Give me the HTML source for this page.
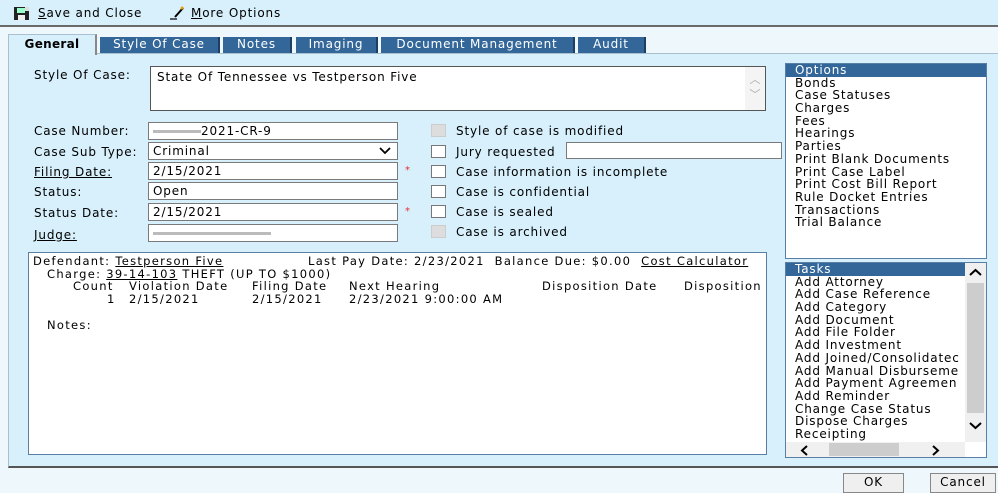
<!DOCTYPE html>
<html><head><meta charset="utf-8"><style>
*{margin:0;padding:0;box-sizing:border-box}
body{width:998px;height:489px;overflow:hidden;background:#eef7fc;font-family:"DejaVu Sans","Liberation Sans",sans-serif;font-size:12px;letter-spacing:0.85px;color:#000;position:relative}
.a{position:absolute;white-space:nowrap}
.tb{left:0;top:0;width:998px;height:27px;background:#d7f0fc;border-bottom:2px solid #6a6a6a}
.tab{position:absolute;top:37px;height:16px;background:#336699;color:#fff;text-align:center;line-height:15px;font-size:12px;border-right:2px solid #1e3e63;white-space:nowrap}
.main{left:8px;top:53px;width:990px;height:415px;background:#d7f0fc;border-top:1px solid #a8c0d0;border-bottom:2px solid #555;border-left:1px solid #a8c0d0}
.in{position:absolute;height:18px;background:#fff;border:1px solid #7a7a7a;padding-left:4px;line-height:16px;white-space:nowrap}
.cb{position:absolute;left:431px;width:15px;height:13px;background:#fff;border:1px solid #777}
.cb.d{background:#ddd;border-color:#ccc}
.lbl{position:absolute;left:456px;white-space:nowrap}
.red{position:absolute;left:405px;color:#e03030;font-size:10px}
.u{text-decoration:underline}
.box{position:absolute;background:#fff;border:1px solid #5a7fa5}
.hd{background:#336699;color:#fff;height:15px;line-height:14px;padding-left:9px}
.ls div{padding-left:9px;height:12.7px;line-height:12.7px;white-space:nowrap}
.btn{position:absolute;top:473px;height:20px;border:1px solid #888;background:#efefef;text-align:center;line-height:17px}
.pn{font-size:11.5px;letter-spacing:1.3px}
</style></head><body>
<div class="a tb"></div>
<svg class="a" style="left:14px;top:7px" width="16" height="13" viewBox="0 0 16 13"><rect x="0" y="0" width="15" height="13" fill="#222"/><rect x="3" y="1" width="8" height="5" fill="#9fc"/><rect x="4" y="8" width="7" height="5" fill="#eee"/><rect x="11" y="0" width="4" height="4" fill="#ddd"/></svg>
<div class="a" style="left:38px;top:6px"><span class="u">S</span>ave and Close</div>
<svg class="a" style="left:170px;top:6px" width="16" height="14" viewBox="0 0 16 14"><path d="M5 11 L13 2" stroke="#000" stroke-width="2"/><path d="M11 3 L13 1" stroke="#e8a000" stroke-width="2.5"/><path d="M0 13 H7" stroke="#000" stroke-width="1.2"/></svg>
<div class="a" style="left:191px;top:6px"><span class="u">M</span>ore Options</div>
<div class="a main"></div>
<div class="a" style="left:8px;top:34px;width:89px;height:21px;background:#d7f0fc;border:1px solid #a8c0d0;border-bottom:none;border-right:2px solid #888;font-weight:bold;text-align:center;line-height:19px;letter-spacing:0.3px">General</div>
<div class="tab" style="left:100px;width:120px">Style Of Case</div>
<div class="tab" style="left:223px;width:69px">Notes</div>
<div class="tab" style="left:296px;width:82px">Imaging</div>
<div class="tab" style="left:381px;width:194px">Document Management</div>
<div class="tab" style="left:578px;width:68px">Audit</div>
<div class="a" style="left:34px;top:68px">Style Of Case:</div>
<div class="a" style="left:150px;top:66px;width:616px;height:45px;background:#fff;border:1px solid #555;padding:3px 6px">State Of Tennessee vs Testperson Five</div>
<div class="a" style="left:745px;top:67px;width:20px;height:43px;background:#f4f4f4;color:#aaa;text-align:center;font-size:11px;line-height:15px;padding-top:5px;letter-spacing:0">︿<br>﹀</div>
<div class="a" style="left:34px;top:124px">Case Number:</div>
<div class="in" style="left:148px;top:122px;width:250px"><span style="display:inline-block;width:48px;height:3px;background:#bbb;vertical-align:middle"></span>2021-CR-9</div>
<div class="a" style="left:34px;top:145px">Case Sub Type:</div>
<div class="in" style="left:148px;top:142px;width:250px">Criminal<svg style="position:absolute;right:6px;top:4px" width="12" height="8" viewBox="0 0 12 8"><path d="M1 1 L6 6 L11 1" stroke="#000" stroke-width="1.8" fill="none"/></svg></div>
<div class="a u" style="left:34px;top:165px">Filing Date:</div>
<div class="in" style="left:148px;top:162px;width:250px">2/15/2021</div>
<div class="a" style="left:34px;top:185px">Status:</div>
<div class="in" style="left:148px;top:182px;width:250px">Open</div>
<div class="a" style="left:34px;top:206px">Status Date:</div>
<div class="in" style="left:148px;top:203px;width:250px">2/15/2021</div>
<div class="a u" style="left:34px;top:228px">Judge:</div>
<div class="in" style="left:148px;top:224px;width:250px"><span style="display:inline-block;width:118px;height:3px;background:#bbb;vertical-align:middle"></span></div>
<div class="red" style="top:165px">*</div><div class="red" style="top:206px">*</div>
<div class="cb d" style="top:124px"></div><div class="lbl" style="top:124px">Style of case is modified</div>
<div class="cb" style="top:145px"></div><div class="lbl" style="top:145px">Jury requested</div>
<div class="in" style="left:566px;top:142px;width:216px;height:17px"></div>
<div class="cb" style="top:165px"></div><div class="lbl" style="top:165px">Case information is incomplete</div>
<div class="cb" style="top:185px"></div><div class="lbl" style="top:185px">Case is confidential</div>
<div class="cb" style="top:205px"></div><div class="lbl" style="top:205px">Case is sealed</div>
<div class="cb d" style="top:225px"></div><div class="lbl" style="top:225px">Case is archived</div>
<div class="box pn" style="left:28px;top:252px;width:739px;height:203px;border-color:#5a7fa5">
<div class="a" style="left:4px;top:1px">Defendant: <span class="u">Testperson Five</span></div>
<div class="a" style="left:279px;top:1px">Last Pay Date: 2/23/2021 &nbsp;Balance Due: $0.00 &nbsp;<span class="u">Cost Calculator</span></div>
<div class="a" style="left:18px;top:14px">Charge: <span class="u">39-14-103</span> THEFT (UP TO $1000)</div>
<div class="a" style="left:44px;top:26px">Count</div>
<div class="a" style="left:100px;top:26px">Violation Date</div>
<div class="a" style="left:223px;top:26px">Filing Date</div>
<div class="a" style="left:320px;top:26px">Next Hearing</div>
<div class="a" style="left:513px;top:26px">Disposition Date</div>
<div class="a" style="left:655px;top:26px">Disposition</div>
<div class="a" style="left:78px;top:39px">1</div>
<div class="a" style="left:100px;top:39px">2/15/2021</div>
<div class="a" style="left:223px;top:39px">2/15/2021</div>
<div class="a" style="left:320px;top:39px">2/23/2021 9:00:00 AM</div>
<div class="a" style="left:18px;top:65px">Notes:</div>
</div>
<div class="box ls" style="left:785px;top:63px;width:202px;height:196px">
<div class="hd">Options</div>
<div>Bonds</div><div>Case Statuses</div><div>Charges</div><div>Fees</div><div>Hearings</div><div>Parties</div><div>Print Blank Documents</div><div>Print Case Label</div><div>Print Cost Bill Report</div><div>Rule Docket Entries</div><div>Transactions</div><div>Trial Balance</div>
</div>
<div class="box ls" style="left:785px;top:262px;width:202px;height:196px;overflow:hidden">
<div class="hd" style="width:179px">Tasks</div>
<div>Add Attorney</div><div>Add Case Reference</div><div>Add Category</div><div>Add Document</div><div>Add File Folder</div><div>Add Investment</div><div>Add Joined/Consolidatec</div><div>Add Manual Disburseme</div><div>Add Payment Agreemen</div><div>Add Reminder</div><div>Change Case Status</div><div>Dispose Charges</div><div>Receipting</div>
<div class="a" style="left:179px;top:0;width:21px;height:179px;background:#f0f0f0"></div>
<svg class="a" style="left:183px;top:5px" width="13" height="9" viewBox="0 0 13 9"><path d="M1 7 L6.5 2 L12 7" stroke="#000" stroke-width="2" fill="none"/></svg>
<div class="a" style="left:181px;top:20px;width:17px;height:130px;background:#cdcdcd"></div>
<svg class="a" style="left:183px;top:158px" width="13" height="9" viewBox="0 0 13 9"><path d="M1 2 L6.5 7 L12 2" stroke="#000" stroke-width="2" fill="none"/></svg>
<div class="a" style="left:0;top:179px;width:179px;height:15px;background:#f0f0f0"><span style="position:absolute;left:43px;top:1px;width:70px;height:13px;background:#cdcdcd"></span></div>
<svg class="a" style="left:14px;top:182px" width="9" height="11" viewBox="0 0 9 11"><path d="M7 1 L2 5.5 L7 10" stroke="#000" stroke-width="2" fill="none"/></svg>
<svg class="a" style="left:145px;top:182px" width="9" height="11" viewBox="0 0 9 11"><path d="M2 1 L7 5.5 L2 10" stroke="#000" stroke-width="2" fill="none"/></svg>
</div>
<div class="btn" style="left:843px;width:61px">OK</div>
<div class="btn" style="left:930px;width:66px">Cancel</div>
</body></html>
